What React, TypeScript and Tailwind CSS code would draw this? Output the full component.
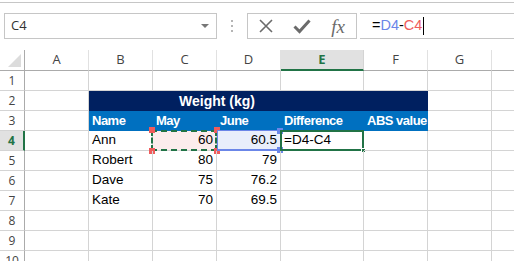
import React from 'react'

const ui = { fontFamily: '"Open Sans", "Noto Sans", sans-serif' }
const cellFont = { fontFamily: '"Liberation Sans", Arial, sans-serif' }

// column widths incl. right grid line
const cols = [
  { key: 'A', w: 'w-[64px]' },
  { key: 'B', w: 'w-[64px]' },
  { key: 'C', w: 'w-[64px]' },
  { key: 'D', w: 'w-[64px]' },
  { key: 'E', w: 'w-[83px]' },
  { key: 'F', w: 'w-[64px]' },
  { key: 'G', w: 'w-[64px]' },
  { key: 'H', w: 'w-[40px]' },
]

const people = [
  { row: 5, name: 'Robert', may: '80', june: '79' },
  { row: 6, name: 'Dave', may: '75', june: '76.2' },
  { row: 7, name: 'Kate', may: '70', june: '69.5' },
]

function RowHead({ n, active = false }: { n: number; active?: boolean }) {
  return (
    <div
      style={ui}
      className={
        'w-[25px] shrink-0 h-full flex items-center justify-center text-[12px] border-b border-[#d4d4d4] ' +
        (active
          ? 'bg-[#e1e1e1] text-[#217346] font-bold border-r-2 border-r-[#217346]'
          : 'bg-white text-[#444] border-r border-r-[#ababab]')
      }
    >
      {n}
    </div>
  )
}

function Cell({ w, className = '', children }: { w: string; className?: string; children?: React.ReactNode }) {
  return (
    <div
      style={cellFont}
      className={`${w} shrink-0 h-full border-r border-b border-[#d4d4d4] flex items-center px-[3px] text-[13.5px] text-black relative ${className}`}
    >
      {children}
    </div>
  )
}

function Handle({ className }: { className: string }) {
  return <span className={`absolute w-[6px] h-[6px] ${className}`} />
}

function EmptyRow({ n }: { n: number }) {
  return (
    <div className="flex h-[20px]">
      <RowHead n={n} />
      {cols.map((c) => (
        <Cell key={c.key} w={c.w} />
      ))}
    </div>
  )
}

export default function App() {
  return (
    <div className="w-[514px] h-[261px] overflow-hidden bg-white select-none">
      {/* formula bar */}
      <div className="h-[48px] border-t border-[#c6c6c6] mt-[2px] relative">
        <div className="flex items-start pt-[10px]">
          <div
            style={ui}
            className="ml-[4px] w-[213px] h-[26px] border border-[#c6c6c6] flex items-center justify-between pl-[6px] pr-[7px] text-[13px] text-[#333]"
          >
            <span>C4</span>
            <span className="w-0 h-0 border-l-[4px] border-r-[4px] border-t-[4px] border-l-transparent border-r-transparent border-t-[#777]" />
          </div>
          <div className="w-[30px] h-[26px] flex flex-col items-center justify-center gap-[3px]">
            <span className="w-[2px] h-[2px] bg-[#b5b5b5]" />
            <span className="w-[2px] h-[2px] bg-[#b5b5b5]" />
            <span className="w-[2px] h-[2px] bg-[#b5b5b5]" />
          </div>
          <div className="w-[110px] h-[26px] border border-[#c6c6c6] flex items-center">
            <div className="w-[36px] flex justify-center">
              <svg width="16" height="16" viewBox="0 0 16 16">
                <path d="M2 2 L14 14 M14 2 L2 14" stroke="#6b6b6b" strokeWidth="1.6" />
              </svg>
            </div>
            <div className="w-[37px] flex justify-center">
              <svg width="18" height="16" viewBox="0 0 18 16">
                <path d="M1.5 8.5 L6.5 13.5 L16.5 2.5" stroke="#6b6b6b" strokeWidth="3" fill="none" />
              </svg>
            </div>
            <div
              className="w-[36px] flex justify-center text-[19px] italic text-[#6b6b6b] leading-none"
              style={{ fontFamily: '"Liberation Serif", "Times New Roman", serif' }}
            >
              fx
            </div>
          </div>
          <div
            style={cellFont}
            className="ml-[3px] flex-1 h-[26px] border-y border-[#c6c6c6] flex items-center pl-[12px] text-[14.5px]"
          >
            <span className="text-black">=</span>
            <span className="text-[#6b86e8]">D4</span>
            <span className="text-black">-</span>
            <span className="text-[#ef5c5c]">C4</span>
            <span className="w-[1px] h-[18px] bg-black ml-[1px]" />
          </div>
        </div>
      </div>

      {/* column headers */}
      <div className="flex h-[21px]" style={ui}>
        <div className="w-[25px] shrink-0 h-full border-r border-b border-[#ababab] relative bg-white">
          <svg className="absolute right-[3px] bottom-[3px]" width="13" height="13" viewBox="0 0 13 13">
            <path d="M13 0 L13 13 L0 13 Z" fill="#dcdcdc" />
          </svg>
        </div>
        {cols.map((c) =>
          c.key === 'E' ? (
            <div
              key={c.key}
              className={`${c.w} shrink-0 h-full bg-[#e1e1e1] border-r border-r-[#d4d4d4] border-b-2 border-b-[#217346] flex items-center justify-center text-[13px] font-bold text-[#217346]`}
            >
              E
            </div>
          ) : (
            <div
              key={c.key}
              className={`${c.w} shrink-0 h-full bg-white border-r border-r-[#e1e1e1] border-b border-b-[#ababab] flex items-center justify-center text-[13px] text-[#444]`}
            >
              {c.key === 'H' ? '' : c.key}
            </div>
          )
        )}
      </div>

      <EmptyRow n={1} />

      {/* row 2 */}
      <div className="flex h-[20px]">
        <RowHead n={2} />
        <Cell w="w-[64px]" />
        <div className="flex h-full bg-[#002060]">
          <div className="w-[64px] shrink-0 h-full" />
          <div
            style={cellFont}
            className="w-[128px] shrink-0 h-full flex items-center justify-center text-[14px] font-bold text-white"
          >
            Weight (kg)
          </div>
          <div className="w-[83px] shrink-0 h-full" />
          <div className="w-[64px] shrink-0 h-full border-r border-[#002060]" />
        </div>
        <Cell w="w-[64px]" />
        <Cell w="w-[40px]" />
      </div>

      {/* row 3 */}
      <div className="flex h-[20px]">
        <RowHead n={3} />
        <Cell w="w-[64px]" />
        {['Name', 'May', 'June', 'Difference', 'ABS value'].map((t, i) => (
          <div
            key={t}
            style={cellFont}
            className={`${i === 3 ? 'w-[83px]' : 'w-[64px]'} shrink-0 h-full bg-[#0070c0] flex items-center px-[3px] text-[13px] tracking-[-0.5px] font-bold text-white whitespace-nowrap border-b border-[#0070c0]`}
          >
            {t}
          </div>
        ))}
        <Cell w="w-[64px]" />
        <Cell w="w-[40px]" />
      </div>

      {/* row 4 */}
      <div className="flex h-[20px] relative">
        <RowHead n={4} active />
        <Cell w="w-[64px]" />
        <Cell w="w-[64px]">Ann</Cell>
        <Cell w="w-[64px]" className="justify-end bg-[#fcecec]">
          60
          <span className="absolute left-[-2px] top-[-1px] right-[-1px] bottom-[-1px] border-2 border-dashed border-[#217346]" />
          <Handle className="bg-[#ef5c5c] left-[-4px] top-[-4px]" />
          <Handle className="bg-[#ef5c5c] right-[-4px] top-[-4px]" />
          <Handle className="bg-[#ef5c5c] left-[-4px] bottom-[-4px]" />
          <Handle className="bg-[#ef5c5c] right-[-4px] bottom-[-4px]" />
        </Cell>
        <Cell w="w-[64px]" className="justify-end bg-[#e9eefb]">
          60.5
          <span className="absolute left-0 top-[-1px] right-[-1px] bottom-[-1px] border border-b-2 border-[#6b86e8]" />
          <Handle className="bg-[#6b86e8] right-[-3px] top-[-3px] w-[5px] h-[5px]" />
          <Handle className="bg-[#6b86e8] right-[-3px] bottom-[-3px] w-[5px] h-[5px]" />
        </Cell>
        <Cell w="w-[83px]">
          =D4-C4
          <span className="absolute left-[-1px] top-[-1px] right-[-1px] bottom-[-1px] border-2 border-[#217346]" />
          <span className="absolute right-[-3px] bottom-[-3px] w-[5px] h-[5px] bg-[#217346] border border-white" />
        </Cell>
        <Cell w="w-[64px]" />
        <Cell w="w-[64px]" />
        <Cell w="w-[40px]" />
      </div>

      {people.map((p) => (
        <div key={p.row} className="flex h-[20px]">
          <RowHead n={p.row} />
          <Cell w="w-[64px]" />
          <Cell w="w-[64px]">{p.name}</Cell>
          <Cell w="w-[64px]" className="justify-end">{p.may}</Cell>
          <Cell w="w-[64px]" className="justify-end">{p.june}</Cell>
          <Cell w="w-[83px]" />
          <Cell w="w-[64px]" />
          <Cell w="w-[64px]" />
          <Cell w="w-[40px]" />
        </div>
      ))}

      <EmptyRow n={8} />
      <EmptyRow n={9} />
      <EmptyRow n={10} />
    </div>
  )
}
